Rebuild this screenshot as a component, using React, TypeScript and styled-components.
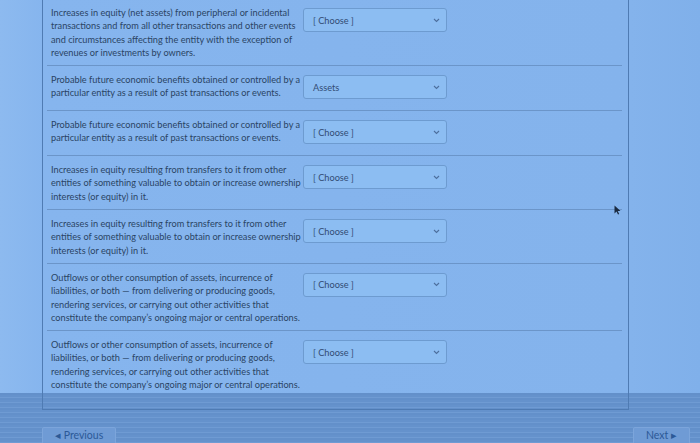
import React from "react";
import styled, { createGlobalStyle } from "styled-components";

const GlobalStyle = createGlobalStyle`
  html, body {
    margin: 0;
    padding: 0;
    width: 700px;
    height: 443px;
    overflow: hidden;
    background: #86b6ee;
  }
  * {
    box-sizing: border-box;
  }
`;

type Item = {
  text: string;
  value: string;
};

const items: Item[] = [
  {
    text: "Increases in equity (net assets) from peripheral or incidental transactions and from all other transactions and other events and circumstances affecting the entity with the exception of revenues or investments by owners.",
    value: "[ Choose ]",
  },
  {
    text: "Probable future economic benefits obtained or controlled by a particular entity as a result of past transactions or events.",
    value: "Assets",
  },
  {
    text: "Probable future economic benefits obtained or controlled by a particular entity as a result of past transactions or events.",
    value: "[ Choose ]",
  },
  {
    text: "Increases in equity resulting from transfers to it from other entities of something valuable to obtain or increase ownership interests (or equity) in it.",
    value: "[ Choose ]",
  },
  {
    text: "Increases in equity resulting from transfers to it from other entities of something valuable to obtain or increase ownership interests (or equity) in it.",
    value: "[ Choose ]",
  },
  {
    text: "Outflows or other consumption of assets, incurrence of liabilities, or both \u2014 from delivering or producing goods, rendering services, or carrying out other activities that constitute the company\u2019s ongoing major or central operations.",
    value: "[ Choose ]",
  },
  {
    text: "Outflows or other consumption of assets, incurrence of liabilities, or both \u2014 from delivering or producing goods, rendering services, or carrying out other activities that constitute the company\u2019s ongoing major or central operations.",
    value: "[ Choose ]",
  },
];

const Page = styled.div`
  position: relative;
  width: 700px;
  height: 443px;
  padding-left: 42px;
  display: flex;
  flex-direction: column;
  overflow: hidden;
  font-family: Lato, "Liberation Sans", sans-serif;
  background:
    linear-gradient(90deg, #8dbaef 0, #86b5ee 42px, #84b3ec 630px, #80b0ea 100%) top left / 100% 393px no-repeat,
    repeating-linear-gradient(180deg, #6592cc 0 2px, #6f9bd3 2px 3px, #6390ca 3px 5px);
`;

const Panel = styled.div`
  width: 587px;
  margin-top: -1px;
  border: 1px solid #4f7bb3;
  border-top: none;
  padding: 0 6px 12px 4px;
`;

const Row = styled.div<{ $last?: boolean }>`
  display: flex;
  align-items: flex-start;
  padding: 7px 0 6px 4px;
  border-bottom: ${(p) => (p.$last ? "none" : "1px solid #6b95c9")};
`;

const Prompt = styled.div`
  width: 252px;
  flex: none;
  font-size: 9.2px;
  line-height: 13.3px;
  color: #2a4464;
`;

const Select = styled.div`
  width: 144px;
  height: 24px;
  margin: 2px 0 5px;
  flex: none;
  display: flex;
  align-items: center;
  justify-content: space-between;
  padding: 0 6px 0 9px;
  background: #8cbdf2;
  border: 1px solid #6d9bd0;
  border-radius: 3px;
  font-size: 9.2px;
  color: #324c74;
`;

const Chevron = styled.svg`
  width: 7px;
  height: 5px;
  color: #4d6f9e;
`;

const Footer = styled.div`
  width: 648px;
  margin-top: 17px;
  display: flex;
  justify-content: space-between;
`;

const NavButton = styled.div`
  height: 22px;
  padding: 1px 12px 0;
  background: #6f9bd5;
  border: 1px solid #7ca5db;
  border-radius: 2px;
  font-size: 10.5px;
  line-height: 13px;
  color: #2c5997;
`;

const Cursor = styled.svg`
  position: absolute;
  left: 614px;
  top: 205px;
  width: 7px;
  height: 10px;
`;

const App: React.FC = () => {
  return (
    <>
      <GlobalStyle />
      <Page>
        <Panel>
          {items.map((item, i) => (
            <Row key={i} $last={i === items.length - 1}>
              <Prompt>{item.text}</Prompt>
              <Select>
                <span>{item.value}</span>
                <Chevron viewBox="0 0 7 5">
                  <path d="M1 1l2.5 2.5L6 1" fill="none" stroke="currentColor" strokeWidth="1.1" />
                </Chevron>
              </Select>
            </Row>
          ))}
        </Panel>
        <Footer>
          <NavButton>◂ Previous</NavButton>
          <NavButton>Next ▸</NavButton>
        </Footer>
        <Cursor viewBox="0 0 7 10">
          <path d="M0.5 0.5v8l2-2 1.5 3 1.2-.6-1.5-3h2.8z" fill="#1a2a40" />
        </Cursor>
      </Page>
    </>
  );
};

export default App;
